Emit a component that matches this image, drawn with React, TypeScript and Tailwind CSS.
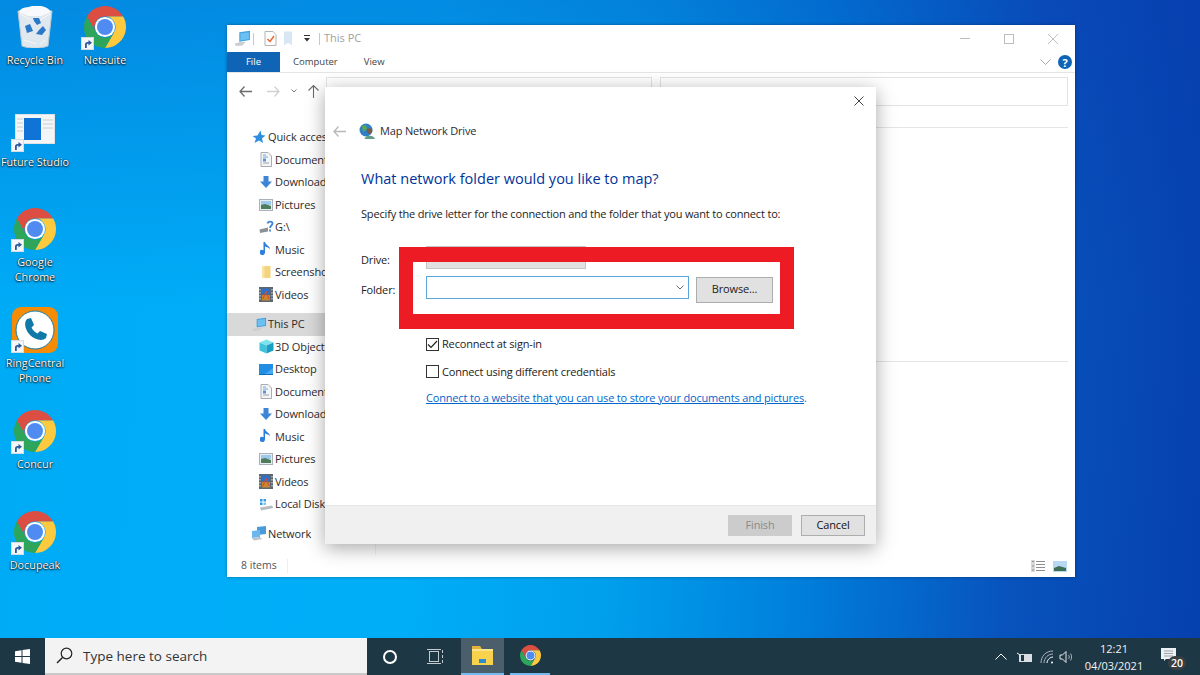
import React from "react";

const FONT = "font-['Open_Sans','Noto_Sans',sans-serif]";

function Chrome({ size = 42 }: { size?: number }) {
  return (
    <svg width={size} height={size} viewBox="0 0 100 100">
      <path d="M6.7 25A50 50 0 0 1 93.3 25H50A25 25 0 0 0 28.3 62.5Z" fill="#dc4e41" />
      <path d="M93.3 25A50 50 0 0 1 50 100L71.7 62.5A25 25 0 0 0 50 25Z" fill="#fdc93f" />
      <path d="M50 100A50 50 0 0 1 6.7 25L28.3 62.5A25 25 0 0 0 71.7 62.5Z" fill="#2da55a" />
      <circle cx="50" cy="50" r="24" fill="#fff" />
      <circle cx="50" cy="50" r="19" fill="#4f8bf0" />
    </svg>
  );
}

function Shortcut() {
  return (
    <svg className="absolute left-0 bottom-0" width="13" height="13" viewBox="0 0 13 13">
      <rect x="0.5" y="0.5" width="12" height="12" fill="#f4f6f8" stroke="#d5dbe2" />
      <path d="M4 11V7.5C4 6 5 5 6.5 5H7.5V3L11 5.8 7.5 8.5V6.8H6.8C6 6.8 5.8 7.4 5.8 8V11Z" fill="#2c5a9c" />
    </svg>
  );
}

function DesktopIcon({ x, y, label, children, shortcut = true }: { x: number; y: number; label: React.ReactNode; children: React.ReactNode; shortcut?: boolean }) {
  return (
    <div className="absolute w-[76px] flex flex-col items-center" style={{ left: x, top: y }}>
      <div className="relative w-[48px] h-[46px] flex items-center justify-center">
        {children}
        {shortcut && <Shortcut />}
      </div>
      <div className="text-white text-[10.8px] leading-[15px] text-center mt-[2px] [text-shadow:0_1px_2px_#000,0_0_1px_#000]">{label}</div>
    </div>
  );
}

function Monitor({ s = 16 }: { s?: number }) {
  return (
    <svg width={s} height={s} viewBox="0 0 16 16">
      <path d="M5 2 15 0.8V9.5L5 11Z" fill="#3f9fe0" />
      <path d="M6 3 14 2V8.7L6 9.8Z" fill="#6cc0f2" />
      <path d="M0.5 13 5 11.5 11 11 8 14.5 2 15Z" fill="#c9ced3" />
    </svg>
  );
}
const Doc = () => (
  <svg width="14" height="15" viewBox="0 0 14 15">
    <path d="M2 .5H9L12.5 4V14.5H2Z" fill="#f4f5f7" stroke="#a9adb2" />
    <path d="M4 3h3M4 5h5" stroke="#6fa7dc" strokeWidth="1" />
    <rect x="4" y="6.5" width="3" height="3" fill="#4f96dc" />
    <path d="M4 11h6" stroke="#9aa0a6" />
  </svg>
);
const Down = () => (
  <svg width="14" height="14" viewBox="0 0 14 14"><path d="M4.5 1H9.500V6.500H13L7 13 1 6.500H4.500Z" fill="#3d85d8" /></svg>
);
const Pics = () => (
  <svg width="14" height="12" viewBox="0 0 14 12">
    <rect x=".5" y=".5" width="13" height="11" fill="#e8edf2" stroke="#aab1b8" />
    <rect x="2" y="2" width="10" height="4" fill="#9fc9ea" />
    <path d="M2 6 6 5l6 2v3H2Z" fill="#4e7d5e" />
  </svg>
);
const Note = () => (
  <svg width="12" height="15" viewBox="0 0 12 15"><path d="M5 1V10.500A2.800 2.500 0 1 1 3.500 8.300V0H5C5.500 3 10 3.500 10 7.500 9 5.500 7 5 5 4.500Z" fill="#2e7fdc" /></svg>
);
const Folder = () => (
  <svg width="12" height="14" viewBox="0 0 12 14"><path d="M2 1H6L10.500 1V13H2Z" fill="#f4d37e" /><path d="M2 1H4.500V13H2Z" fill="#f8e3a4" /></svg>
);
const Film = () => (
  <svg width="14" height="15" viewBox="0 0 14 15">
    <rect width="14" height="15" fill="#5c6670" />
    <rect x="3" y="1.500" width="8" height="5.500" fill="#2f6fc6" />
    <rect x="3" y="8" width="8" height="5.500" fill="#c8862e" />
    <path d="M4 12l3-8 3 8" stroke="#d24a3c" fill="none" />
    <path d="M1 2v11M13 2v11" stroke="#d6dade" strokeDasharray="1.500 1.500" />
  </svg>
);
const Cube = () => (
  <svg width="15" height="15" viewBox="0 0 15 15">
    <path d="M7.500 .5 14.500 3.500 7.500 6.500 .5 3.500Z" fill="#7fe3ee" />
    <path d="M.5 3.500 7.500 6.500V14.500L.5 11.500Z" fill="#3fc3dc" />
    <path d="M14.500 3.500 7.500 6.500V14.500L14.500 11.500Z" fill="#18a0c4" />
  </svg>
);
const DesktopI = () => (
  <svg width="14" height="11" viewBox="0 0 14 11"><rect width="14" height="11" fill="#1f8ee3" /><path d="M0 10 H14 V11 H0Z" fill="#0e6fbd" /><path d="M6 10 14 4V10Z" fill="#49aaf0" /></svg>
);
const Disk = () => (
  <svg width="15" height="14" viewBox="0 0 15 14">
    <path d="M1 10.500 13 8.500 14.500 11 2 13.500Z" fill="#b7bcc1" />
    <rect x="1" y="2" width="2.500" height="2.500" fill="#2e9be6" /><rect x="4.500" y="2" width="2.500" height="2.500" fill="#2e9be6" /><rect x="1" y="5.500" width="2.500" height="2.500" fill="#2e9be6" /><rect x="4.500" y="5.500" width="2.500" height="2.500" fill="#7cc5f2" />
  </svg>
);
const GDrive = () => (
  <svg width="15" height="14" viewBox="0 0 15 14">
    <path d="M.5 9.500 9 7.500V11.500L1 13Z" fill="#8c9196" />
    <path d="M8.500 3.500C9 1 13.500 1 13.500 3.500 13.500 5.500 11 5.500 11 8" stroke="#3d85d8" strokeWidth="1.800" fill="none" />
    <rect x="10.100" y="9.500" width="1.800" height="2" fill="#3d85d8" />
  </svg>
);
const NetI = () => (
  <svg width="16" height="15" viewBox="0 0 16 15">
    <path d="M6 1 15 0V8L6 9Z" fill="#4a9bdc" />
    <path d="M1 5 9 4 9 11 1 12Z" fill="#6cb8ee" />
    <path d="M1 12 9 11 11 13 3 14.500Z" fill="#b9c3cc" />
  </svg>
);
const Star = () => (
  <svg width="14" height="14" viewBox="0 0 14 14"><path d="M8.500.5 9.500 5 13.500 5.500 10 8.500 11 13 7 10.500 2.500 13 4 8.500.5 6 5.500 5.500Z" fill="#2e8fe0" /></svg>
);

function SideRow({ icon, label, child = true, active = false, gapTop = 0 }: { icon: React.ReactNode; label: string; child?: boolean; active?: boolean; gapTop?: number }) {
  return (
    <div
      className={`h-[22.5px] flex items-center whitespace-nowrap text-[11px] tracking-[-0.1px] text-[#2b2b2b] ${active ? "bg-[#d9d9d9]" : ""} ${child ? "pl-[30px]" : "pl-[23px]"}`}
      style={{ marginTop: gapTop }}
    >
      <span className="w-[18px] flex justify-center shrink-0">{icon}</span>
      <span>{label}</span>
    </div>
  );
}

function Explorer() {
  return (
    <div className="absolute left-[227px] top-[25px] w-[848px] h-[552px] bg-white flex flex-col shadow-[0_0_3px_rgba(0,0,0,0.35)]">
      {/* title bar */}
      <div className="h-[27px] flex items-center shrink-0 relative">
        <span className="ml-[7px]"><Monitor s={17} /></span>
        <span className="ml-[2px] w-px h-[12px] bg-[#c8c8c8]" />
        <svg className="ml-[10px]" width="13" height="15" viewBox="0 0 13 15"><path d="M1 .5H9L12 3.500V14.500H1Z" fill="#fdfdfd" stroke="#b5b5b5" /><path d="M3.500 8 6 10.500 10 5" stroke="#e8622a" strokeWidth="1.400" fill="none" /></svg>
        <svg className="ml-[6px]" width="10" height="15" viewBox="0 0 10 15"><path d="M1 .5H9V14L5 12 1 14Z" fill="#d9e6f4" /></svg>
        <svg className="ml-[10px]" width="8" height="7" viewBox="0 0 8 7"><rect x="1" y="0" width="6" height="1" fill="#333" /><path d="M1 3H7L4 6.500Z" fill="#333" /></svg>
        <span className="ml-[8px] w-px h-[12px] bg-[#c8c8c8]" />
        <span className="ml-[4px] text-[11px] text-[#a0a0a0]">This PC</span>
        <div className="ml-auto flex items-center mr-[17px] gap-[34px]">
          <span className="w-[10px] h-px bg-[#bdbdbd]" />
          <span className="w-[10px] h-[10px] border border-[#bdbdbd]" />
          <svg width="10" height="10" viewBox="0 0 10 10"><path d="M0 0 10 10M10 0 0 10" stroke="#bdbdbd" /></svg>
        </div>
      </div>
      {/* ribbon tabs */}
      <div className="h-[21px] shrink-0 flex items-stretch border-b border-[#e5e5e5] text-[9.5px] text-[#444] relative">
        <div className="w-[53px] bg-[#0f64b5] text-white flex items-center justify-center">File</div>
        <div className="ml-[13px] flex items-center">Computer</div>
        <div className="ml-[26px] flex items-center">View</div>
        <div className="ml-auto mr-[3px] flex items-center gap-[7px]">
          <svg width="11" height="7" viewBox="0 0 11 7"><path d="M.5.5 5.500 5.500 10.500.5" stroke="#a8a8a8" fill="none" /></svg>
          <span className="w-[14px] h-[14px] rounded-full bg-[#0f64b5] text-white text-[11px] font-bold flex items-center justify-center leading-none">?</span>
        </div>
      </div>
      {/* address row */}
      <div className="h-[36px] shrink-0 flex items-center relative">
        <svg className="ml-[12px]" width="13" height="11" viewBox="0 0 13 11"><path d="M5.500.5 1 5.500 5.500 10.500M1 5.500H13" stroke="#6b6b6b" strokeWidth="1.300" fill="none" /></svg>
        <svg className="ml-[15px]" width="13" height="11" viewBox="0 0 13 11"><path d="M7.500.5 12 5.500 7.500 10.500M12 5.500H0" stroke="#d0d0d0" strokeWidth="1.300" fill="none" /></svg>
        <svg className="ml-[11px]" width="6" height="4" viewBox="0 0 6 4"><path d="M.5.5 3 3 5.500.5" stroke="#777" fill="none" /></svg>
        <svg className="ml-[11px]" width="11" height="13" viewBox="0 0 11 13"><path d="M.5 5.500 5.500.5 10.500 5.500M5.500.5V13" stroke="#6b6b6b" strokeWidth="1.100" fill="none" /></svg>
        <div className="ml-[7px] w-[326px] h-[29px] border border-[#e3e3e3]" />
        <div className="ml-[8px] w-[408px] h-[29px] border border-[#e3e3e3]" />
      </div>
      {/* body */}
      <div className="flex-1 flex min-h-0">
        <div className="w-[149px] shrink-0 pt-[17px] overflow-hidden border-r border-[#f2f2f2]">
          <SideRow child={false} icon={<Star />} label="Quick access" />
          <SideRow icon={<Doc />} label="Documents" />
          <SideRow icon={<Down />} label="Downloads" />
          <SideRow icon={<Pics />} label="Pictures" />
          <SideRow icon={<GDrive />} label="G:\" />
          <SideRow icon={<Note />} label="Music" />
          <SideRow icon={<Folder />} label="Screenshots" />
          <SideRow icon={<Film />} label="Videos" />
          <SideRow child={false} active gapTop={7} icon={<Monitor s={15} />} label="This PC" />
          <SideRow icon={<Cube />} label="3D Objects" />
          <SideRow icon={<DesktopI />} label="Desktop" />
          <SideRow icon={<Doc />} label="Documents" />
          <SideRow icon={<Down />} label="Downloads" />
          <SideRow icon={<Note />} label="Music" />
          <SideRow icon={<Pics />} label="Pictures" />
          <SideRow icon={<Film />} label="Videos" />
          <SideRow icon={<Disk />} label="Local Disk (C:)" />
          <SideRow child={false} gapTop={7} icon={<NetI />} label="Network" />
        </div>
        <div className="flex-1 flex flex-col pr-[7px] pl-[4px]">
          <div className="mt-[18px] h-px bg-[#e5e5e5]" />
          <div className="mt-[233px] h-px bg-[#e5e5e5]" />
        </div>
      </div>
      {/* status */}
      <div className="h-[22px] shrink-0 flex items-center text-[10.5px] text-[#555] relative">
        <span className="ml-[14px]">8 items</span>
        <span className="ml-[10px] w-px h-[14px] bg-[#eeeeee]" />
        <div className="ml-auto mr-[8px] flex items-center gap-[8px]">
          <svg width="14" height="12" viewBox="0 0 14 12"><rect width="4" height="12" fill="#d8d8d8" /><path d="M5 1.500H14M5 4.500H14M5 7.500H14M5 10.500H14M1 1.500H3M1 6H3M1 10H3" stroke="#8f8f8f" strokeWidth="1" /></svg>
          <svg width="14" height="11" viewBox="0 0 14 11"><rect width="14" height="11" fill="#b7d8f3" /><path d="M1 7 6 5l7 2v3H1Z" fill="#3d6f55" /></svg>
        </div>
      </div>
    </div>
  );
}

function Dialog() {
  return (
    <div className="absolute left-[325px] top-[87px] w-[551px] h-[457px] bg-white flex flex-col text-[11px] tracking-[-0.17px] text-[#222] shadow-[0_4px_18px_rgba(0,0,0,0.35)]">
      <div className="h-[28px] flex justify-end items-center pr-[12px] shrink-0">
        <svg width="10" height="10" viewBox="0 0 10 10"><path d="M.5.5 9.500 9.500M9.500.5 .5 9.500" stroke="#444" /></svg>
      </div>
      <div className="flex items-center h-[32px] pl-[8px] shrink-0">
        <svg width="13" height="11" viewBox="0 0 13 11"><path d="M5.500.5 1 5.500 5.500 10.500M1 5.500H13" stroke="#b8b8b8" strokeWidth="1.300" fill="none" /></svg>
        <svg className="ml-[13px]" width="17" height="17" viewBox="0 0 17 17">
          <circle cx="7" cy="7" r="6.500" fill="#2f7fc8" />
          <path d="M3 3 7 2 8 6 4 9Z" fill="#5aa84e" />
          <circle cx="10.500" cy="8" r="2.800" fill="#7a5b48" />
          <path d="M5.500 16C6 11.500 15 11.500 16 16Z" fill="#5f9d85" />
        </svg>
        <span className="ml-[4px] text-[#2b2b2b]">Map Network Drive</span>
      </div>
      <div className="pl-[36px] mt-[22px] text-[14.5px] tracking-normal leading-[20px] text-[#003399] shrink-0">What network folder would you like to map?</div>
      <div className="pl-[36px] mt-[17px] leading-[16px] shrink-0">Specify the drive letter for the connection and the folder that you want to connect to:</div>
      <div className="relative mt-[23px] pl-[36px] flex-1 min-h-0">
        <div className="flex items-center h-[24px]">
          <span className="w-[65px] mt-[6px]">Drive:</span>
          <div className="w-[160px] h-[23px] bg-[#e1e1e1] border border-[#c4c4c4]" />
        </div>
        <div className="flex items-center h-[26px] mt-[7px] relative z-10">
          <span className="w-[65px] mt-[3px]">Folder:</span>
          <div className="w-[263px] h-[23px] -mt-[3px] bg-white border border-[#5ba5dd] flex items-center justify-end pr-[4px]">
            <svg width="8" height="5" viewBox="0 0 8 5"><path d="M.5.5 4 4 7.500.5" stroke="#666" fill="none" /></svg>
          </div>
          <div className="ml-[7px] mt-[1px] w-[77px] h-[26px] bg-[#e1e1e1] border border-[#adadad] flex items-center justify-center">Browse...</div>
        </div>
        {/* red annotation */}
        <div className="absolute left-[74px] top-[2px] w-[395px] h-[82px] border-x-[14px] border-t-[15px] border-b-[15px] border-[#ed1c24]" />
        <div className="flex items-center mt-[34px] ml-[65px]">
          <span className="w-[13px] h-[13px] border border-[#333] flex items-center justify-center">
            <svg width="11" height="9" viewBox="0 0 11 9"><path d="M1 4.500 4 7.500 10 1" stroke="#222" strokeWidth="1.200" fill="none" /></svg>
          </span>
          <span className="ml-[3px]">Reconnect at sign-in</span>
        </div>
        <div className="flex items-center mt-[11px] ml-[65px]">
          <span className="w-[13px] h-[13px] border border-[#333]" />
          <span className="ml-[3px]">Connect using different credentials</span>
        </div>
        <div className="mt-[10px] ml-[65px] text-[#0066cc] whitespace-nowrap"><span className="underline">Connect to a website that you can use to store your documents and pictures</span>.</div>
      </div>
      <div className="h-[39px] shrink-0 bg-[#f0f0f0] border-t border-[#e6e6e6] flex items-center justify-end gap-[9px] pr-[11px]">
        <div className="w-[64px] h-[21px] bg-[#cccccc] text-[#8a8a8a] flex items-center justify-center">Finish</div>
        <div className="w-[64px] h-[21px] bg-[#e1e1e1] border border-[#adadad] text-[#111] flex items-center justify-center">Cancel</div>
      </div>
    </div>
  );
}

function Taskbar() {
  return (
    <div className="absolute left-0 right-0 bottom-0 h-[37px] bg-[#1e3745] flex items-stretch text-white">
      <div className="w-[45px] flex items-center justify-center">
        <svg width="15" height="15" viewBox="0 0 15 15"><path d="M0 2.200 6.500 1.200V7H0ZM7.500 1 15 0V7H7.500ZM0 8H6.500V13.800L0 12.800ZM7.500 8H15V15L7.500 14Z" fill="#fff" /></svg>
      </div>
      <div className="w-[322px] bg-[#f3f3f3] flex items-center border-b-2 border-[#c9c9c9] text-[#333] text-[13.5px]">
        <svg className="ml-[11px]" width="17" height="17" viewBox="0 0 17 17"><circle cx="10.500" cy="6.500" r="5.300" stroke="#222" strokeWidth="1.200" fill="none" /><path d="M6.500 10.500 1 16" stroke="#222" strokeWidth="1.400" /></svg>
        <span className="ml-[10px] mt-[1px]">Type here to search</span>
      </div>
      <div className="w-[46px] flex items-center justify-center">
        <span className="w-[14px] h-[14px] rounded-full border-2 border-white" />
      </div>
      <div className="w-[48px] flex items-center justify-center pr-[4px]">
        <svg width="17" height="15" viewBox="0 0 17 15"><rect x="2.500" y="2.500" width="9" height="10" fill="none" stroke="#c4cbd0" /><path d="M0 .5H14M0 14.500H14M15.500 1V4M15.500 6V9M15.500 11V14" stroke="#c4cbd0" /></svg>
      </div>
      <div className="w-[43px] bg-[#4a5f6b] border-b-2 border-[#76b9ed] flex items-center justify-center">
        <svg width="21" height="19" viewBox="0 0 21 19"><path d="M0 0H8L10 3H0Z" fill="#e8b23a" /><rect y="3" width="21" height="16" fill="#f8d24c" /><rect y="3" width="21" height="2" fill="#fbe38a" /><rect x="7" y="13" width="7" height="4" fill="#2f8ad4" /></svg>
      </div>
      <div className="w-[6px]" />
      <div className="w-[40px] border-b-2 border-[#76b9ed] flex items-center justify-center"><Chrome size={21} /></div>
      <div className="ml-auto flex items-center">
        <svg width="12" height="7" viewBox="0 0 12 7"><path d="M.5 6.500 6 1 11.500 6.500" stroke="#fff" fill="none" /></svg>
        <svg className="ml-[10px]" width="15" height="10" viewBox="0 0 15 10"><path d="M0 1 3 3" stroke="#fff" /><rect x="2" y="2" width="13" height="8" fill="#d9dee2" /><rect x="4" y="3" width="3" height="6" fill="#1e3745" /></svg>
        <svg className="ml-[8px]" width="14" height="14" viewBox="0 0 14 14" fill="none" stroke="#aab4ba"><path d="M1 13C1 6 6 1 13 1M4 13C4 8 8 4 13 4" /><path d="M7 13C7 10 10 7 13 7" stroke="#fff" /><circle cx="12" cy="12.500" r="1" fill="#fff" stroke="none" /></svg>
        <svg className="ml-[5px]" width="15" height="14" viewBox="0 0 15 14" fill="none" stroke="#e4e8ea"><path d="M1 5H3.500L7 1.500V12.500L3.500 9H1Z" /><path d="M9.500 5C10.500 6 10.500 8 9.500 9M11.500 3.500C13 5.500 13 8.500 11.500 10.500" stroke="#a9b3b8" /></svg>
        <div className="w-[80px] text-center text-[11px] leading-[17px] text-[#f2f2f2]">
          <div>12:21</div>
          <div>04/03/2021</div>
        </div>
        <div className="w-[46px] self-stretch relative flex items-center pl-[7px]">
          <svg width="15" height="14" viewBox="0 0 15 14" className="-mt-[3px]"><path d="M0 0H15V11H5L3 13V11H0Z" fill="#eef1f3" /><path d="M3 3H12M3 5.500H12M3 8H12" stroke="#9aa4aa" /></svg>
          <span className="absolute left-[14px] top-[18px] w-[18px] h-[14px] rounded-full bg-[#3a3f42] text-[10.500px] font-semibold text-white flex items-center justify-center leading-none">20</span>
        </div>
      </div>
    </div>
  );
}

export default function App() {
  return (
    <div className={`relative w-[1200px] h-[675px] overflow-hidden ${FONT} bg-[linear-gradient(94deg,#00abf6_0%,#00aef8_35%,#009fec_52%,#0080dc_67%,#0853bd_84%,#0540ae_100%)]`}>
      <div className="absolute inset-0 bg-[linear-gradient(180deg,rgba(10,50,170,0.28)_0%,rgba(10,50,170,0)_45%)]" />

      <DesktopIcon x={-3} y={4} shortcut={false} label="Recycle Bin">
        <svg width="38" height="42" viewBox="0 0 38 42">
          <path d="M2 5 36 5 32 40 C24 43 14 43 6 40Z" fill="#dfe8ee" stroke="#b8c7d2" />
          <path d="M3 6C6 0 12 2 16 0 22 -1 32 0 35 6L25 10 12 10Z" fill="#f7f9fa" />
          <path d="M4 8 15 14M34 8 24 14M8 34 20 38M30 34 24 38" stroke="#fff" opacity="0.7" />
          <path d="M17 12 23 12 25 17 21 19 18 15ZM9 20 14 18 17 25 11 27ZM27 20 30 24 26 29 20 28 23 24Z" fill="#2a78c8" />
        </svg>
      </DesktopIcon>
      <DesktopIcon x={67} y={4} label="Netsuite"><Chrome /></DesktopIcon>

      <DesktopIcon x={-3} y={106} label="Future Studio">
        <svg width="40" height="30" viewBox="0 0 40 30">
          <rect width="40" height="30" fill="#f3f5f7" stroke="#c8d0d6" />
          <rect x="9" y="4" width="17" height="22" fill="#0f74d6" />
          <path d="M2 5H8M2 9H8M2 13H8M2 17H8M28 6H38M28 10H38M28 14H38" stroke="#c9ced2" />
        </svg>
      </DesktopIcon>
      <DesktopIcon x={-3} y={206} label={<>Google<br />Chrome</>}><Chrome /></DesktopIcon>
      <DesktopIcon x={-3} y={307} label={<>RingCentral<br />Phone</>}>
        <svg width="46" height="46" viewBox="0 0 46 46">
          <rect width="46" height="46" rx="9" fill="#f68b05" />
          <circle cx="23" cy="23" r="19" fill="#fff" stroke="#1a7ea8" />
          <path d="M15 12 19 11 22 18 19.500 20.500C20.500 23 23 25.500 25.500 26.500L28 24 35 27 34 31C30 35 22 32 18 28 14 24 11 16 15 12Z" fill="#0f7aa8" />
        </svg>
      </DesktopIcon>
      <DesktopIcon x={-3} y={408} label="Concur"><Chrome /></DesktopIcon>
      <DesktopIcon x={-3} y={509} label="Docupeak"><Chrome /></DesktopIcon>

      <Explorer />
      <Dialog />
      <Taskbar />
    </div>
  );
}
